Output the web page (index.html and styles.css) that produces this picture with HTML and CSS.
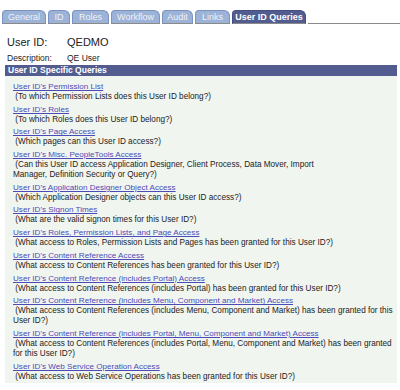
FILE: index.html
```html
<!DOCTYPE html>
<html>
<head>
<meta charset="utf-8">
<link rel="stylesheet" href="styles.css">
</head>
<body>
<div class="tabs">
  <div class="tab w-general">General</div>
  <div class="tab w-id">ID</div>
  <div class="tab w-roles">Roles</div>
  <div class="tab w-workflow">Workflow</div>
  <div class="tab w-audit">Audit</div>
  <div class="tab w-links">Links</div>
  <div class="tab active w-queries">User ID Queries</div>
  <div class="tab-fill"></div>
</div>
<div class="info">
  <div class="row big"><span class="lbl">User ID:</span><span class="val">QEDMO</span></div>
  <div class="row small"><span class="lbl">Description:</span><span class="val">QE User</span></div>
</div>
<div class="panel">
  <div class="panel-head">User ID Specific Queries</div>
  <div class="list">
    <div class="item"><a href="#">User ID's Permission List</a><div class="desc">&nbsp;(To which Permission Lists does this User ID belong?)</div></div>
    <div class="item"><a href="#">User ID's Roles</a><div class="desc">&nbsp;(To which Roles does this User ID belong?)</div></div>
    <div class="item"><a href="#">User ID's Page Access</a><div class="desc">&nbsp;(Which pages can this User ID access?)</div></div>
    <div class="item"><a href="#">User ID's Misc. PeopleTools Access</a><div class="desc">&nbsp;(Can this User ID access Application Designer, Client Process, Data Mover, Import<br>Manager, Definition Security or Query?)</div></div>
    <div class="item"><a href="#">User ID's Application Designer Object Access</a><div class="desc">&nbsp;(Which Application Designer objects can this User ID access?)</div></div>
    <div class="item"><a href="#">User ID's Signon Times</a><div class="desc">&nbsp;(What are the valid signon times for this User ID?)</div></div>
    <div class="item"><a href="#">User ID's Roles, Permission Lists, and Page Access</a><div class="desc">&nbsp;(What access to Roles, Permission Lists and Pages has been granted for this User ID?)</div></div>
    <div class="item"><a href="#">User ID's Content Reference Access</a><div class="desc">&nbsp;(What access to Content References has been granted for this User ID?)</div></div>
    <div class="item"><a href="#">User ID's Content Reference (includes Portal) Access</a><div class="desc">&nbsp;(What access to Content References (includes Portal) has been granted for this User ID?)</div></div>
    <div class="item"><a href="#">User ID's Content Reference (includes Menu, Component and Market) Access</a><div class="desc">&nbsp;(What access to Content References (includes Menu, Component and Market) has been granted for this<br>User ID?)</div></div>
    <div class="item"><a href="#">User ID's Content Reference (includes Portal, Menu, Component and Market) Access</a><div class="desc">&nbsp;(What access to Content References (includes Portal, Menu, Component and Market) has been granted<br>for this User ID?)</div></div>
    <div class="item"><a href="#">User ID's Web Service Operation Access</a><div class="desc">&nbsp;(What access to Web Service Operations has been granted for this User ID?)</div></div>
  </div>
</div>
</body>
</html>
```
FILE: styles.css
```css
html, body {
  margin: 0;
  padding: 0;
  background: #ffffff;
  font-family: "Liberation Sans", Arial, sans-serif;
  color: #222;
}
.tabs {
  display: flex;
  align-items: flex-end;
  padding: 9px 0 0 2px;
  height: 15px;
}
.tab {
  box-sizing: border-box;
  height: 14px;
  margin-right: 2px;
  background: #9cb2d6;
  border: 1px solid #7a93c0;
  border-radius: 4px 6px 0 0;
  color: #eef2fa;
  font-size: 9px;
  line-height: 13px;
  text-align: center;
  border-bottom: 1px solid #8a8a8a;
}
.tab.active {
  background: #525c8e;
  border-color: #454f80;
  color: #ffffff;
  font-weight: bold;
  border-bottom: 1px solid #8a8a8a;
}
.w-general { width: 44px; }
.w-id { width: 22px; }
.w-roles { width: 37px; }
.w-workflow { width: 49px; }
.w-audit { width: 31px; }
.w-links { width: 35px; }
.w-queries { width: 74px; }
.tab-fill {
  flex: 1;
  border-bottom: 1px solid #8a8a8a;
  height: 0;
}
.info {
  padding: 11px 0 0 7px;
}
.row {
  display: flex;
}
.row .lbl {
  width: 60px;
}
.row.big {
  font-size: 11px;
  line-height: 14px;
  height: 14px;
}
.row.small {
  font-size: 8.5px;
  line-height: 11px;
  margin-top: 4px;
}
.panel {
  margin: 1px 3px 0 5px;
  background: #f1f5f0;
  padding-bottom: 1px;
}
.panel-head {
  background: #525c8e;
  color: #ffffff;
  font-weight: bold;
  font-size: 8.5px;
  line-height: 11px;
  padding-left: 3px;
}
.list {
  padding: 6px 0 0 8px;
}
.item {
  font-size: 8.2px;
  line-height: 10px;
  margin-bottom: 2.7px;
  white-space: nowrap;
}
.item:last-child {
  margin-bottom: 0;
}
.item a {
  color: #4b4bb8;
  text-decoration: underline;
  font-size: 8.1px;
}
.desc {
  color: #222;
}
```
